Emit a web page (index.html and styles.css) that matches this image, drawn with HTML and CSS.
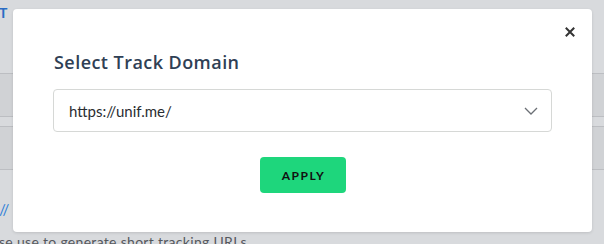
FILE: index.html
```html
<!DOCTYPE html>
<html>
<head>
<meta charset="utf-8">
<link rel="stylesheet" href="styles.css">
</head>
<body>
<div class="page">
  <div class="crumb">T</div>
  <div class="field"></div>
  <div class="field second"></div>
  <div class="link">//</div>
  <p class="hint">se use to generate short tracking URLs.</p>
</div>
<div class="modal">
  <button class="close" aria-label="Close">
    <svg width="10" height="10" viewBox="0 0 10 10"><path d="M1.5 1.5 L8.5 8.5 M8.5 1.5 L1.5 8.5" stroke="#333" stroke-width="2" stroke-linecap="square" fill="none"/></svg>
  </button>
  <h2 class="title">Select Track Domain</h2>
  <div class="select">
    <span class="value">https://unif.me/</span>
    <svg class="chevron" width="14" height="8" viewBox="0 0 14 8"><path d="M1 1 L7 7 L13 1" stroke="#6b6f75" stroke-width="1.3" fill="none"/></svg>
  </div>
  <div class="actions">
    <button class="apply">APPLY</button>
  </div>
</div>
</body>
</html>
```

FILE: styles.css
```css
html, body {
  margin: 0;
  padding: 0;
}
body {
  width: 604px;
  height: 244px;
  overflow: hidden;
  background: #d8dadd;
  font-family: Lato, "Open Sans", sans-serif;
  position: relative;
}
.page {
  display: flex;
  flex-direction: column;
  padding-top: 6px;
}
.crumb {
  color: #2b6cc4;
  font-weight: 700;
  font-size: 14px;
  line-height: 14px;
  margin-left: -1px;
  height: 67px;
}
.field {
  height: 42px;
  background: #d0d2d5;
  border-top: 1px solid #bcbec2;
  border-bottom: 1px solid #bcbec2;
}
.field.second {
  margin-top: 9px;
}
.link {
  margin-top: 31px;
  color: #2f7fd8;
  font-size: 15px;
  line-height: 16px;
  margin-left: -1px;
}
.hint {
  margin: 17px 0 0 0;
  font-size: 14px;
  color: #55585d;
  line-height: 16px;
  margin-left: -1px;
  letter-spacing: 0.3px;
}
.modal {
  position: absolute;
  left: 13px;
  top: 9px;
  width: 579px;
  height: 223px;
  box-sizing: border-box;
  background: #fff;
  border-radius: 4px;
  box-shadow: 0 1px 3px rgba(0,0,0,0.12);
  padding: 41px 40px 0 40px;
}
.close {
  position: absolute;
  right: 15px;
  top: 16px;
  width: 14px;
  height: 14px;
  padding: 0;
  border: 0;
  background: none;
  display: flex;
  align-items: center;
  justify-content: center;
}
.title {
  margin: 0;
  font-family: "Open Sans", Lato, sans-serif;
  font-size: 18px;
  line-height: 24px;
  font-weight: 600;
  color: #2f4055;
  letter-spacing: 0.45px;
  padding-left: 1px;
}
.select {
  margin-top: 15px;
  height: 43px;
  box-sizing: border-box;
  border: 1px solid #d6d8d6;
  border-radius: 4px;
  display: flex;
  align-items: center;
  justify-content: space-between;
  padding: 0 13px 0 15px;
}
.value {
  font-size: 15px;
  color: #2a2d31;
}
.actions {
  display: flex;
  justify-content: center;
  margin-top: 25px;
}
.apply {
  width: 86px;
  height: 36px;
  border: 0;
  border-radius: 4px;
  background: #1ed67c;
  color: #111;
  font-family: Lato, "Open Sans", sans-serif;
  font-weight: 700;
  font-size: 12px;
  letter-spacing: 1.5px;
  padding: 0 0 0 1px;
  margin-left: 1px;
}
```
